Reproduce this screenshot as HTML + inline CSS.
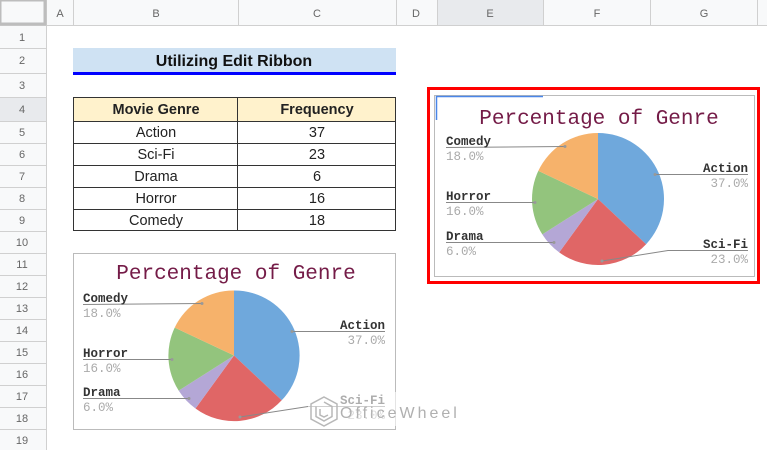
<!DOCTYPE html>
<html><head><meta charset="utf-8"><style>
html,body{margin:0;padding:0;background:#fff;width:767px;height:450px;overflow:hidden}
svg{display:block}
.hd{font-family:"Liberation Sans",sans-serif;font-size:11px;fill:#666;text-anchor:middle}
.cell{font-family:"Liberation Sans",sans-serif;font-size:14.5px;fill:#222;text-anchor:middle}
.lb{font-family:"Liberation Mono",monospace;font-size:12.5px;font-weight:bold;fill:#333}
.pc{font-family:"Liberation Mono",monospace;font-size:12.5px;fill:#aaa}
.tt{font-family:"Liberation Mono",monospace;font-size:21px;fill:#741b47;text-anchor:middle}
</style></head><body>
<svg width="767" height="450" viewBox="0 0 767 450" xmlns="http://www.w3.org/2000/svg">
<rect x="0" y="0" width="767" height="25" fill="#f8f9fa"/>
<rect x="0" y="0" width="46" height="450" fill="#f8f9fa"/>
<rect x="437" y="0" width="106" height="25" fill="#e8eaed"/>
<rect x="0" y="97" width="46" height="24" fill="#e8eaed"/>
<g stroke="#d0d0d0" stroke-width="1">
<line x1="0" y1="25.5" x2="767" y2="25.5"/>
<line x1="46.5" y1="0" x2="46.5" y2="450"/>
<line x1="73.5" y1="0" x2="73.5" y2="25"/><line x1="238.5" y1="0" x2="238.5" y2="25"/>
<line x1="396.5" y1="0" x2="396.5" y2="25"/><line x1="437.5" y1="0" x2="437.5" y2="25"/>
<line x1="543.5" y1="0" x2="543.5" y2="25"/><line x1="650.5" y1="0" x2="650.5" y2="25"/>
<line x1="757.5" y1="0" x2="757.5" y2="25"/>
<line x1="0" y1="48.5" x2="46" y2="48.5"/><line x1="0" y1="73.5" x2="46" y2="73.5"/>
<line x1="0" y1="97.5" x2="46" y2="97.5"/><line x1="0" y1="121.5" x2="46" y2="121.5"/>
<line x1="0" y1="143.5" x2="46" y2="143.5"/><line x1="0" y1="165.5" x2="46" y2="165.5"/>
<line x1="0" y1="187.5" x2="46" y2="187.5"/><line x1="0" y1="209.5" x2="46" y2="209.5"/>
<line x1="0" y1="231.5" x2="46" y2="231.5"/><line x1="0" y1="253.5" x2="46" y2="253.5"/>
<line x1="0" y1="275.5" x2="46" y2="275.5"/><line x1="0" y1="297.5" x2="46" y2="297.5"/>
<line x1="0" y1="319.5" x2="46" y2="319.5"/><line x1="0" y1="341.5" x2="46" y2="341.5"/>
<line x1="0" y1="363.5" x2="46" y2="363.5"/><line x1="0" y1="385.5" x2="46" y2="385.5"/>
<line x1="0" y1="407.5" x2="46" y2="407.5"/><line x1="0" y1="429.5" x2="46" y2="429.5"/>
</g>
<rect x="0" y="0" width="45" height="24" fill="#f8f9fa" stroke="#bdbdbd" stroke-width="3"/>
<text class="hd" x="60" y="17">A</text><text class="hd" x="156" y="17">B</text>
<text class="hd" x="317" y="17">C</text><text class="hd" x="416" y="17">D</text>
<text class="hd" x="490" y="17">E</text><text class="hd" x="597" y="17">F</text>
<text class="hd" x="704" y="17">G</text>
<text class="hd" x="22" y="41">1</text><text class="hd" x="22" y="64">2</text>
<text class="hd" x="22" y="89">3</text><text class="hd" x="22" y="113">4</text>
<text class="hd" x="22" y="136">5</text><text class="hd" x="22" y="158">6</text>
<text class="hd" x="22" y="180">7</text><text class="hd" x="22" y="202">8</text>
<text class="hd" x="22" y="224">9</text><text class="hd" x="22" y="246">10</text>
<text class="hd" x="22" y="268">11</text><text class="hd" x="22" y="290">12</text>
<text class="hd" x="22" y="312">13</text><text class="hd" x="22" y="334">14</text>
<text class="hd" x="22" y="356">15</text><text class="hd" x="22" y="378">16</text>
<text class="hd" x="22" y="400">17</text><text class="hd" x="22" y="422">18</text>
<text class="hd" x="22" y="444">19</text>
<rect x="73" y="48" width="323" height="24" fill="#cfe2f3"/>
<rect x="73" y="72" width="323" height="3" fill="#0000ff"/>
<text x="234" y="66" style="font-family:'Liberation Sans',sans-serif;font-size:16px;font-weight:bold;text-anchor:middle" fill="#111">Utilizing Edit Ribbon</text>
<rect x="73.5" y="97.5" width="322" height="24" fill="#fff2cc"/>
<g stroke="#333" stroke-width="1" fill="none">
<rect x="73.5" y="97.5" width="322" height="133"/>
<line x1="237.5" y1="97" x2="237.5" y2="231"/>
<line x1="73" y1="121.5" x2="396" y2="121.5"/><line x1="73" y1="143.5" x2="396" y2="143.5"/>
<line x1="73" y1="165.5" x2="396" y2="165.5"/><line x1="73" y1="187.5" x2="396" y2="187.5"/>
<line x1="73" y1="209.5" x2="396" y2="209.5"/>
</g>
<text class="cell" x="156" y="114" font-weight="bold">Movie Genre</text>
<text class="cell" x="317" y="114" font-weight="bold">Frequency</text>
<text class="cell" x="156" y="137">Action</text><text class="cell" x="317" y="137">37</text>
<text class="cell" x="156" y="159">Sci-Fi</text><text class="cell" x="317" y="159">23</text>
<text class="cell" x="156" y="181">Drama</text><text class="cell" x="317" y="181">6</text>
<text class="cell" x="156" y="203">Horror</text><text class="cell" x="317" y="203">16</text>
<text class="cell" x="156" y="225">Comedy</text><text class="cell" x="317" y="225">18</text>

<rect x="428.5" y="88.5" width="330" height="194" fill="none" stroke="#ff0000" stroke-width="3"/>
<rect x="434.5" y="95.5" width="320" height="181" fill="#fff" stroke="#bbb"/>
<line x1="436" y1="96.5" x2="543" y2="96.5" stroke="#4a86e8" stroke-width="1.5"/>
<line x1="436.5" y1="96" x2="436.5" y2="120" stroke="#4a86e8" stroke-width="1.5"/>
<text class="tt" x="599" y="124">Percentage of Genre</text>
<path d="M598,199 L598,133 A66,66 0 0 1 646.1,244.2 Z" fill="#6fa8dc"/>
<path d="M598,199 L646.1,244.2 A66,66 0 0 1 559.2,252.4 Z" fill="#e06666"/>
<path d="M598,199 L559.2,252.4 A66,66 0 0 1 542.3,234.4 Z" fill="#b4a7d6"/>
<path d="M598,199 L542.3,234.4 A66,66 0 0 1 538.3,170.9 Z" fill="#93c47d"/>
<path d="M598,199 L538.3,170.9 A66,66 0 0 1 598,133 Z" fill="#f6b26b"/>
<g stroke="#888" stroke-width="1" fill="none">
<path d="M446,147.5 L565,146.5"/><path d="M446,202.5 L535,202.5"/><path d="M446,242.5 L554,242.5"/>
<path d="M655,174.5 L748,174.5"/><path d="M748,250.5 L668,250.5 L602,261"/>
</g>
<g fill="#999"><circle cx="565" cy="146.5" r="1.5"/><circle cx="535" cy="202.5" r="1.5"/><circle cx="554" cy="242.5" r="1.5"/><circle cx="655" cy="174.5" r="1.5"/><circle cx="602" cy="261" r="1.5"/></g>
<text class="lb" x="446" y="145">Comedy</text><text class="pc" x="446" y="160">18.0%</text>
<text class="lb" x="446" y="200">Horror</text><text class="pc" x="446" y="215">16.0%</text>
<text class="lb" x="446" y="240">Drama</text><text class="pc" x="446" y="255">6.0%</text>
<text class="lb" x="748" y="172" text-anchor="end">Action</text><text class="pc" x="748" y="187" text-anchor="end">37.0%</text>
<text class="lb" x="748" y="248" text-anchor="end">Sci-Fi</text><text class="pc" x="748" y="263" text-anchor="end">23.0%</text>

<rect x="73.5" y="253.5" width="322" height="176" fill="#fff" stroke="#bbb"/>
<text class="tt" x="236" y="279">Percentage of Genre</text>
<path d="M234,355.5 L234,290.5 A65,65 0 0 1 281.7,400.3 Z" fill="#6fa8dc"/>
<path d="M234,355.5 L281.7,400.3 A65,65 0 0 1 195.5,408.5 Z" fill="#e06666"/>
<path d="M234,355.5 L195.5,408.5 A65,65 0 0 1 178.7,390.6 Z" fill="#b4a7d6"/>
<path d="M234,355.5 L178.7,390.6 A65,65 0 0 1 174.7,327.6 Z" fill="#93c47d"/>
<path d="M234,355.5 L174.7,327.6 A65,65 0 0 1 234,290.5 Z" fill="#f6b26b"/>
<g stroke="#888" stroke-width="1" fill="none">
<path d="M83,304.5 L202,303.5"/><path d="M83,359.5 L172,359.5"/><path d="M83,398.5 L189,398.5"/>
<path d="M292,331.5 L385,331.5"/><path d="M385,406.5 L308,406.5 L240,417"/>
</g>
<g fill="#999"><circle cx="202" cy="303.5" r="1.5"/><circle cx="172" cy="359.5" r="1.5"/><circle cx="189" cy="398.5" r="1.5"/><circle cx="292" cy="331.5" r="1.5"/><circle cx="240" cy="417" r="1.5"/></g>
<text class="lb" x="83" y="302">Comedy</text><text class="pc" x="83" y="317">18.0%</text>
<text class="lb" x="83" y="357">Horror</text><text class="pc" x="83" y="372">16.0%</text>
<text class="lb" x="83" y="396">Drama</text><text class="pc" x="83" y="411">6.0%</text>
<text class="lb" x="385" y="329" text-anchor="end">Action</text><text class="pc" x="385" y="344" text-anchor="end">37.0%</text>
<text class="lb" x="385" y="404" text-anchor="end">Sci-Fi</text><text class="pc" x="385" y="419" text-anchor="end">23.0%</text>

<rect x="308" y="392" width="150" height="34" fill="#fff" opacity="0.6"/>
<g stroke="#b8b8b8" stroke-width="1.5" fill="none">
<path d="M324,397 L337,404 L337,419 L324,426 L311,419 L311,404 Z"/>
<path d="M324,402 L332,406.5 L332,416.5 L324,421 L316,416.5 L316,406.5"/>
<path d="M320,409 L320,415 L324,417 L328,415"/>
</g>
<text x="340" y="418" style="font-family:'Liberation Sans',sans-serif;font-size:16px;letter-spacing:3px" fill="#b0b0b0">OfficeWheel</text>
</svg>
</body></html>
